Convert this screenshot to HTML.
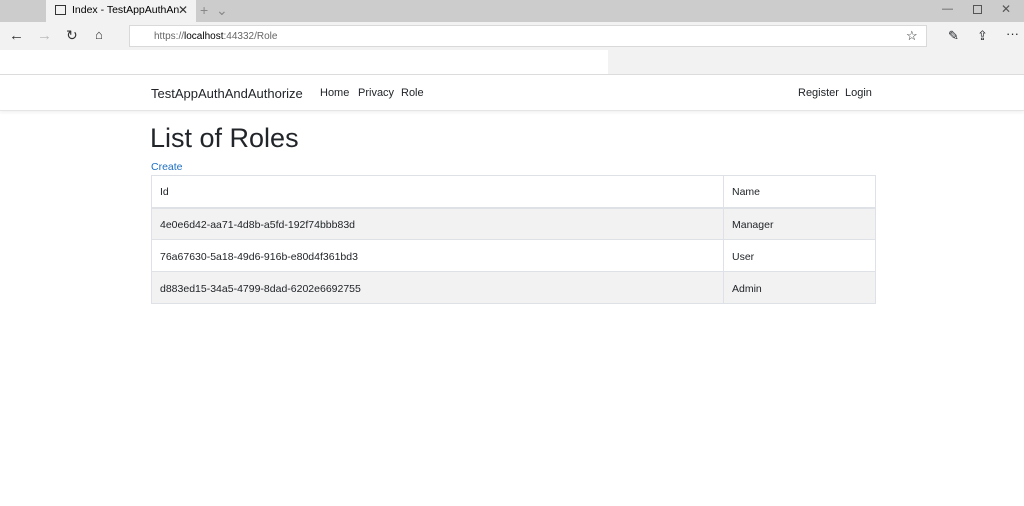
<!DOCTYPE html>
<html><head><meta charset="utf-8"><style>
*{margin:0;padding:0;box-sizing:border-box}
body{width:1024px;height:506px;overflow:hidden;background:#fff;font-family:"Liberation Sans",sans-serif;color:#212529;position:relative}
.abs{position:absolute;white-space:nowrap}
.tb{top:0;left:0;width:1024px;height:22px;background:#cccccc}
.tab{top:0;left:46px;width:150px;height:22px;background:#f2f2f2;font-size:10.5px;color:#000;padding:4px 0 0 26px;overflow:hidden}
.tool{top:22px;left:0;width:1024px;height:28px;background:#f2f2f2}
.addr{top:25px;left:129px;width:798px;height:22px;background:#fff;border:1px solid #d9d9d9;font-size:10px;color:#666;padding:5px 0 0 24px}
.gray{top:50px;left:608px;width:416px;height:24px;background:#f2f2f2}
.nav{top:74px;left:0;width:1024px;height:37px;border-top:1px solid #dcdcdc;border-bottom:1px solid #e5e5e5;box-shadow:0 2px 3px rgba(0,0,0,.05)}
.nav span{position:absolute;font-size:11px;top:12px}
table{position:absolute;top:175px;left:151px;width:725px;border-collapse:collapse;font-size:10.5px}
td{border:1px solid #dee2e6;padding:2px 8px 0;height:32px;vertical-align:middle}
tr:nth-child(even) td{background:#f2f2f2}
tr:first-child td{border-bottom:2px solid #dee2e6}
</style></head><body>
<div class="abs tb"></div>
<div class="abs tab">Index - TestAppAuthAn</div>
<div class="abs" style="top:3px;left:178px;font-size:12px;color:#333">✕</div>
<div class="abs" style="top:5px;left:55px;width:11px;height:10px;border:1px solid #333"></div>
<div class="abs" style="top:2px;left:200px;font-size:14px;color:#888">+&nbsp;&nbsp;⌄</div>
<div class="abs" style="top:3px;left:942px;font-size:11px;color:#555">—</div>
<div class="abs" style="top:5px;left:973px;width:9px;height:9px;border:1px solid #555"></div>
<div class="abs" style="top:2px;left:1001px;font-size:12px;color:#555">✕</div>
<div class="abs tool"></div>
<div class="abs" style="top:27px;left:9px;font-size:15px;color:#333">←</div>
<div class="abs" style="top:27px;left:37px;font-size:15px;color:#bbb">→</div>
<div class="abs" style="top:27px;left:66px;font-size:14px;color:#333">↻</div>
<div class="abs" style="top:27px;left:95px;font-size:13px;color:#333">⌂</div>
<div class="abs addr">https://<b style="color:#000;font-weight:normal">localhost</b>:44332/Role</div>
<div class="abs" style="top:28px;left:906px;font-size:13px">☆</div>
<div class="abs" style="top:28px;left:948px;font-size:13px">✎</div>
<div class="abs" style="top:28px;left:977px;font-size:13px">⇪</div>
<div class="abs" style="top:26px;left:1006px;font-size:13px">···</div>
<div class="abs gray"></div>
<div class="abs nav">
<span style="left:151px;font-size:13px;top:11px">TestAppAuthAndAuthorize</span>
<span style="left:320px">Home</span><span style="left:358px">Privacy</span><span style="left:401px">Role</span>
<span style="left:798px">Register</span><span style="left:845px">Login</span>
</div>
<div class="abs" style="top:123px;left:150px;font-size:27px">List of Roles</div>
<div class="abs" style="top:161px;left:151px;font-size:10.5px;color:#1b6ec2">Create</div>
<table>
<tr><td style="width:572px">Id</td><td>Name</td></tr>
<tr><td>4e0e6d42-aa71-4d8b-a5fd-192f74bbb83d</td><td>Manager</td></tr>
<tr><td>76a67630-5a18-49d6-916b-e80d4f361bd3</td><td>User</td></tr>
<tr><td>d883ed15-34a5-4799-8dad-6202e6692755</td><td>Admin</td></tr>
</table>
</body></html>
